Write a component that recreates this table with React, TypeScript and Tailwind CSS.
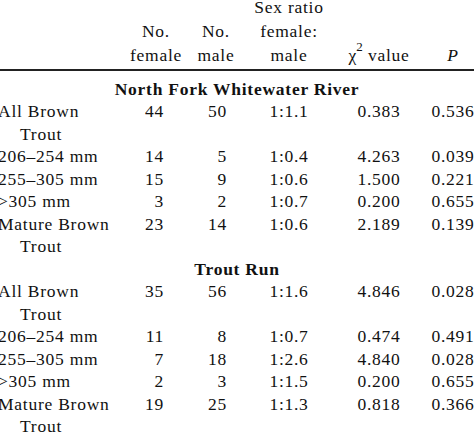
import React from "react";

type Row = {
  label: string;
  cont?: string;
  f: string;
  m: string;
  r: string;
  x: string;
  p: string;
};

const north: Row[] = [
  { label: "All Brown", cont: "Trout", f: "44", m: "50", r: "1:1.1", x: "0.383", p: "0.536" },
  { label: "206–254 mm", f: "14", m: "5", r: "1:0.4", x: "4.263", p: "0.039" },
  { label: "255–305 mm", f: "15", m: "9", r: "1:0.6", x: "1.500", p: "0.221" },
  { label: ">305 mm", f: "3", m: "2", r: "1:0.7", x: "0.200", p: "0.655" },
  { label: "Mature Brown", cont: "Trout", f: "23", m: "14", r: "1:0.6", x: "2.189", p: "0.139" },
];

const trout: Row[] = [
  { label: "All Brown", cont: "Trout", f: "35", m: "56", r: "1:1.6", x: "4.846", p: "0.028" },
  { label: "206–254 mm", f: "11", m: "8", r: "1:0.7", x: "0.474", p: "0.491" },
  { label: "255–305 mm", f: "7", m: "18", r: "1:2.6", x: "4.840", p: "0.028" },
  { label: ">305 mm", f: "2", m: "3", r: "1:1.5", x: "0.200", p: "0.655" },
  { label: "Mature Brown", cont: "Trout", f: "19", m: "25", r: "1:1.3", x: "0.818", p: "0.366" },
];

const cols = "grid grid-cols-[132px_52px_68px_78px_102px_46px]";

function DataRow({ row }: { row: Row }) {
  return (
    <div className={`${cols} leading-[22.5px]`}>
      <div className="whitespace-nowrap">
        <span className="block">{row.label}</span>
        {row.cont && <span className="block pl-[22px]">{row.cont}</span>}
      </div>
      <div className="text-right pr-[18px]">{row.f}</div>
      <div className="text-right pr-[23px]">{row.m}</div>
      <div className="text-center">{row.r}</div>
      <div className="text-center">{row.x}</div>
      <div className="text-center whitespace-nowrap">{row.p}</div>
    </div>
  );
}

function Section({ title, rows }: { title: string; rows: Row[] }) {
  return (
    <div>
      <div className="text-center font-bold leading-[22.5px] whitespace-nowrap">{title}</div>
      {rows.map((r, i) => (
        <DataRow key={i} row={r} />
      ))}
    </div>
  );
}

export default function App() {
  return (
    <div className="w-[474px] h-[437px] overflow-hidden bg-white text-[#111]">
      <div className="ml-[-2px] w-[478px] [font-family:'Liberation_Serif','Times_New_Roman',serif] text-[17.5px] tracking-[0.75px]">
        <div className={`${cols} mt-[-5px] leading-[24px] items-end text-center`}>
          <div />
          <div>
            <div>No.</div>
            <div>female</div>
          </div>
          <div>
            <div>No.</div>
            <div>male</div>
          </div>
          <div className="whitespace-nowrap">
            <div>Sex ratio</div>
            <div>female:</div>
            <div>male</div>
          </div>
          <div className="whitespace-nowrap">
            <span className="tracking-normal">χ</span>
            <sup className="text-[13px] align-[4px] leading-none tracking-normal">2</sup> value
          </div>
          <div className="italic">P</div>
        </div>
        <div className="mt-[2px] border-t-2 border-[#222]" />
        <div className="pt-[6.8px]">
          <Section title="North Fork Whitewater River" rows={north} />
          <Section title="Trout Run" rows={trout} />
        </div>
      </div>
    </div>
  );
}
